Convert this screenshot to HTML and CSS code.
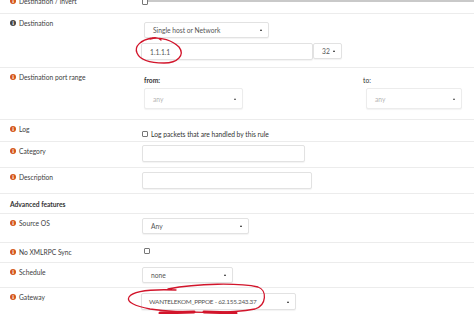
FILE: index.html
```html
<!DOCTYPE html>
<html>
<head>
<meta charset="utf-8">
<link rel="stylesheet" href="styles.css">
</head>
<body>
<div class="form">
  <div class="row r0">
    <div class="label"><span class="info orange">i</span>Destination / invert</div>
    <div class="field"><span class="cb"></span></div>
  </div>
  <div class="row r1">
    <div class="label"><span class="info dark">i</span>Destination</div>
    <div class="field">
      <div class="sel w-net">Single host or Network<span class="caret"></span></div>
      <div class="addr">
        <div class="inp w-ip">1.1.1.1</div>
        <div class="sel w-mask">32<span class="caret"></span></div>
      </div>
    </div>
  </div>
  <div class="row r2">
    <div class="label"><span class="info orange">i</span>Destination port range</div>
    <div class="field ports">
      <div class="pcol from">
        <div class="phead">from:</div>
        <div class="sel dis w-from">any<span class="caret"></span></div>
      </div>
      <div class="pcol to">
        <div class="phead">to:</div>
        <div class="sel dis w-to">any<span class="caret"></span></div>
      </div>
    </div>
  </div>
  <div class="row r3">
    <div class="label"><span class="info orange">i</span>Log</div>
    <div class="field"><span class="cb"></span><span class="cbtext">Log packets that are handled by this rule</span></div>
  </div>
  <div class="row r4">
    <div class="label"><span class="info orange">i</span>Category</div>
    <div class="field"><div class="inp w-cat"></div></div>
  </div>
  <div class="row r5">
    <div class="label"><span class="info orange">i</span>Description</div>
    <div class="field"><div class="inp w-desc"></div></div>
  </div>
  <div class="row r6">
    <div class="label bold">Advanced features</div>
    <div class="field"></div>
  </div>
  <div class="row r7">
    <div class="label"><span class="info orange">i</span>Source OS</div>
    <div class="field"><div class="sel w-os">Any<span class="caret"></span></div></div>
  </div>
  <div class="row r8">
    <div class="label"><span class="info orange">i</span>No XMLRPC Sync</div>
    <div class="field"><span class="cb cb2"></span></div>
  </div>
  <div class="row r9">
    <div class="label"><span class="info orange">i</span>Schedule</div>
    <div class="field"><div class="sel w-sched">none<span class="caret"></span></div></div>
  </div>
  <div class="row r10">
    <div class="label"><span class="info orange">i</span>Gateway</div>
    <div class="field"><div class="sel w-gw">WANTELEKOM_PPPOE - 62.155.243.37<span class="caret"></span></div></div>
  </div>
</div>
<div class="topbar"></div>
<svg class="marks" width="474" height="314" viewBox="0 0 474 314">
  <path d="M150,39 C161,36 173,41 179,47 C185,55 178,63 164,63 C151,63 140,60 137,53 C134,46 141,40 152,38 C156,37 159,38 161,40" />
  <path d="M168,289 C198,283 240,283 258,287 C267,290 267,305 255,309 C230,314 180,313 150,309 C135,306 126,302 129,297 C133,291 150,289 176,290" />
  <path class="thick" d="M160,313 L194,312 M204,312 L236,313" />
</svg>
</body>
</html>
```

FILE: styles.css
```css
html, body {
  margin: 0;
  padding: 0;
  background: #ffffff;
}
body {
  position: relative;
  width: 474px;
  height: 314px;
  overflow: hidden;
  font-family: Lato, "Open Sans", sans-serif;
  font-size: 6.7px;
  line-height: 8px;
  color: #404040;
}
.form {
  margin-top: -8px;
}
.row {
  display: grid;
  grid-template-columns: 141px 1fr;
  box-sizing: border-box;
  border-top: 1px solid #ececec;
}
.r0 { height: 21px; border-top: none; }
.r1 { height: 54px; }
.r2 { height: 52px; }
.r3 { height: 22px; }
.r4 { height: 26px; }
.r5 { height: 26px; }
.r6 { height: 20px; }
.r7 { height: 29px; }
.r8 { height: 20px; }
.r9 { height: 25px; }
.r10 { height: 30px; }

.label {
  padding: 5px 0 0 10px;
  display: flex;
  align-items: flex-start;
  gap: 3px;
}
.label.bold {
  font-weight: bold;
  color: #333;
  padding-top: 6px;
}
.info {
  flex: none;
  width: 6px;
  height: 6px;
  margin-top: 1px;
  border-radius: 50%;
  color: #fff;
  font-size: 5px;
  line-height: 6px;
  font-weight: bold;
  text-align: center;
  font-family: "DejaVu Sans", sans-serif;
}
.info.orange { background: #d4561a; }
.info.dark { background: #444; }

.field {
  display: flex;
  flex-direction: column;
  align-items: flex-start;
}
.r0 .field { flex-direction: row; padding-top: 7px; padding-left: 1px; }
.r1 .field { padding-top: 8px; gap: 5px; }
.r3 .field { flex-direction: row; align-items: center; padding-top: 7px; padding-left: 1px; }
.r4 .field { padding-top: 3px; }
.r5 .field { padding-top: 4px; }
.r7 .field { padding-top: 4px; }
.r8 .field { flex-direction: row; padding-top: 5px; padding-left: 3px; }
.r9 .field { padding-top: 4px; }
.r10 .field { padding-top: 5px; }

.cb {
  display: inline-block;
  width: 4px;
  height: 4px;
  border: 1px solid #777;
  border-radius: 1px;
  background: #fff;
}
.cbtext {
  margin-left: 3px;
  color: #333;
}

.sel, .inp {
  box-sizing: border-box;
  border: 1px solid #e2e2e2;
  border-radius: 2px;
  background: #fff;
  box-shadow: 0 1px 1px rgba(0, 0, 0, 0.05);
  color: #555;
  display: flex;
  align-items: center;
  position: relative;
}
.sel {
  padding-left: 8px;
  height: 16px;
}
.inp {
  height: 17px;
  padding-left: 8px;
}
.caret {
  position: absolute;
  right: 6px;
  top: 50%;
  margin-top: -1px;
  width: 0;
  height: 0;
  border-left: 1.5px solid transparent;
  border-right: 1.5px solid transparent;
  border-bottom: 2px solid #222;
}
.sel.dis {
  color: #b5b5b5;
  border-color: #ececec;
  height: 21px;
}
.sel.dis .caret { border-bottom-color: #444; }

.w-net { width: 125px; margin-left: 3px; }
.addr { display: flex; }
.w-ip { width: 172px; }
.w-mask { width: 29px; }
.w-from { width: 99px; }
.w-to { width: 96px; }
.w-cat { width: 163px; margin-left: 1px; }
.w-desc { width: 170px; margin-left: 1px; }
.w-os { width: 107px; margin-left: 1px; }
.w-sched { width: 91px; margin-left: 1px; }
.w-gw { width: 155px; height: 17px; padding-left: 7px; font-size: 6.4px; letter-spacing: -0.25px; }

.ports {
  flex-direction: row;
  padding-top: 8px;
}
.pcol {
  display: flex;
  flex-direction: column;
}
.pcol.from { width: 219px; padding-left: 3px; }
.pcol.to { padding-left: 3px; }
.phead {
  font-weight: bold;
  color: #333;
  height: 8px;
  margin-bottom: 4px;
}
.pcol.to .phead { margin-left: -3px; font-weight: normal; }

.topbar {
  position: absolute;
  top: 0;
  left: 148px;
  right: 0;
  height: 2px;
  background: #c9c9c9;
}
.marks {
  position: absolute;
  top: 0;
  left: 0;
  pointer-events: none;
}
.marks path {
  fill: none;
  stroke: #d2152b;
  stroke-width: 1.3;
  stroke-linecap: round;
}
.marks path.thick {
  stroke-width: 3;
}
```
